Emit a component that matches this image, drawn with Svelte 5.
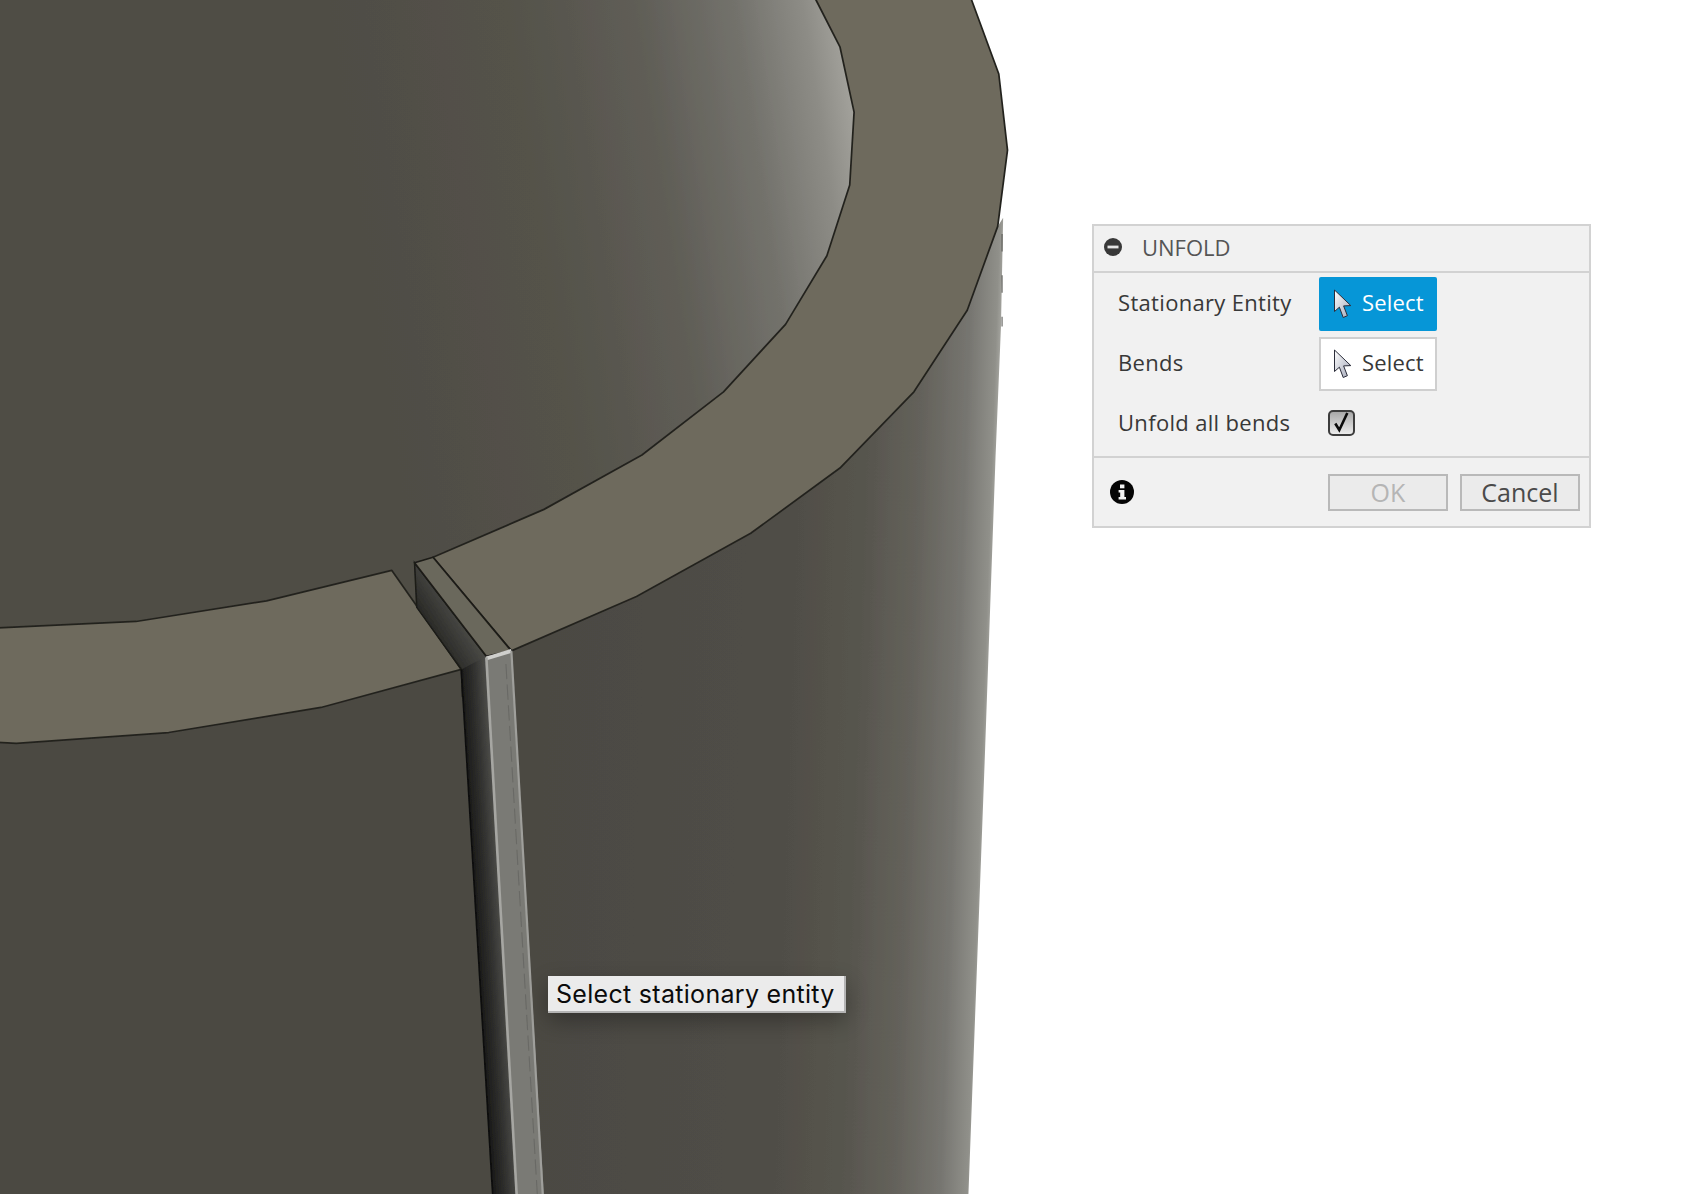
<script>
  let rows = [
    { label: 'Stationary Entity', active: true },
    { label: 'Bends', active: false }
  ];
</script>

<div class="stage">
  <!-- the model, coords are the scene's own -->
  <svg class="scene" viewBox="0 0 1568 1097" preserveAspectRatio="none">
    <defs>
      <linearGradient id="hole" gradientUnits="userSpaceOnUse" x1="330" y1="200" x2="790" y2="130">
        <stop offset="0" stop-color="#4f4d45" />
        <stop offset="0.35" stop-color="#54524a" />
        <stop offset="0.6" stop-color="#5f5d56" />
        <stop offset="0.8" stop-color="#73726c" />
        <stop offset="0.93" stop-color="#8d8c86" />
        <stop offset="1" stop-color="#a3a29c" />
      </linearGradient>
      <linearGradient id="body" gradientUnits="userSpaceOnUse" x1="500" y1="640" x2="912" y2="654">
        <stop offset="0" stop-color="#4b4943" />
        <stop offset="0.55" stop-color="#504e47" />
        <stop offset="0.7" stop-color="#57554e" />
        <stop offset="0.82" stop-color="#64625b" />
        <stop offset="0.92" stop-color="#767570" />
        <stop offset="0.98" stop-color="#90908a" />
        <stop offset="1" stop-color="#b4b4af" />
      </linearGradient>
      <linearGradient id="groove" gradientUnits="userSpaceOnUse" x1="430" y1="800" x2="462" y2="798">
        <stop offset="0" stop-color="#121211" />
        <stop offset="0.55" stop-color="#323230" />
        <stop offset="1" stop-color="#575753" />
      </linearGradient>
      <linearGradient id="wall" gradientUnits="userSpaceOnUse" x1="392" y1="570" x2="440" y2="540">
        <stop offset="0" stop-color="#2a2a27" />
        <stop offset="1" stop-color="#6a6a65" />
      </linearGradient>
      <filter id="soft"><feGaussianBlur stdDeviation="0.6" /></filter>
    </defs>

    <g filter="url(#soft)">
      <!-- inner wall -->
      <rect x="0" y="0" width="800" height="700" fill="url(#hole)" />

      <!-- outer wall -->
      <polygon
        points="0,682 15,683 155,673 295,650 424,615 470,598 585,548 690,490 772,430 840,360 889,285 917,208 922,200 920,300 915,420 905,700 890,1100 0,1100"
        fill="url(#body)"
      />

      <!-- rim, right part -->
      <polygon
        points="398,512 500,468 590,418 665,360 722,298 760,235 781,170 785,103 772,43 750,0 747,-6 891,-6 893,0 918,68 926,138 917,208 889,285 840,360 772,430 690,490 585,548 470,598"
        fill="#6e6a5d"
        stroke="#24231f"
        stroke-width="1.6"
        stroke-linejoin="round"
      />

      <!-- rim, left part -->
      <polygon
        points="-4,577 125,571 245,552 360,524 424,615 295,650 155,673 15,683 -4,682"
        fill="#6e6a5d"
        stroke="#24231f"
        stroke-width="1.6"
        stroke-linejoin="round"
      />

      <!-- side wall of the gap -->
      <polygon points="381,517 447,603 447,640 425,640 424,615 383,558" fill="url(#wall)" stroke="#1b1b18" stroke-width="1.4" />

      <!-- top of the lip -->
      <polygon points="381,517 398,512 470,598 447,603" fill="#6b675b" stroke="#1d1c19" stroke-width="1.6" stroke-linejoin="round" />

      <!-- groove and selected face running down -->
      <polygon points="424,615 447,603 475,1100 453,1100" fill="url(#groove)" />
      <polygon points="447,603 470,598 500,1100 475,1100" fill="#7a7a75" />
      <line x1="424" y1="615" x2="453" y2="1100" stroke="#0f0f0e" stroke-width="1.6" />
      <polyline points="447,605 470,598" fill="none" stroke="#cfcfcc" stroke-width="3.4" />
      <line x1="447" y1="604" x2="475" y2="1100" stroke="#a6a6a2" stroke-width="2.4" />
      <line x1="470" y1="598" x2="499" y2="1100" stroke="#9f9f9b" stroke-width="2" />
      <line x1="465" y1="610" x2="494" y2="1100" stroke="#696965" stroke-width="1" stroke-dasharray="14 5" />
    </g>

    <line x1="921" y1="215" x2="921" y2="300" stroke="#5a5a56" stroke-width="1" stroke-dasharray="16 22" />
  </svg>

  <section class="dialog">
    <header class="head">
      <svg class="minus" viewBox="0 0 18 18">
        <circle cx="9" cy="9" r="9" fill="#383838" />
        <rect x="3.5" y="7.6" width="11" height="2.8" fill="#e4e4e4" />
      </svg>
      <span>UNFOLD</span>
    </header>

    <div class="body">
      {#each rows as row}
        <div class="row">
          <span class="label">{row.label}</span>
          <button class="select" class:active={row.active}>
            <svg class="cursor" viewBox="0 0 20 30">
              <defs>
                <linearGradient id="arrow{row.active ? 'A' : 'B'}" x1="0" y1="0" x2="1" y2="1">
                  <stop offset="0" stop-color="#ffffff" />
                  <stop offset="1" stop-color="#a2a7b8" />
                </linearGradient>
              </defs>
              <path
                d="M1.5 1 L1.5 22.5 L6.4 18.2 L10.2 28.5 L14.4 26.7 L10.6 16.9 L17.8 16.6 Z"
                fill="url(#arrow{row.active ? 'A' : 'B'})"
                stroke="#2b2d3a"
                stroke-width="1"
                stroke-linejoin="miter"
              />
            </svg>
            <span class="cap">Select</span>
          </button>
        </div>
      {/each}
      <div class="row">
        <span class="label">Unfold all bends</span>
        <span class="check">
          <svg viewBox="0 0 22 22">
            <path d="M4.8 11.5 L8.8 18 L16.8 1" fill="none" stroke="#0a0a0a" stroke-width="2.6" />
          </svg>
        </span>
      </div>
    </div>

    <footer class="foot">
      <svg class="info" viewBox="0 0 24 24">
        <circle cx="12" cy="12" r="12" fill="#050505" />
        <rect x="10" y="4.5" width="4.4" height="3.8" fill="#f4f4f4" />
        <path d="M8.6 10 H14.4 V17 H16 V19.6 H8.6 V17 H10.2 V12.4 H8.6 Z" fill="#f4f4f4" />
      </svg>
      <div class="actions">
        <button class="btn" disabled>OK</button>
        <button class="btn">Cancel</button>
      </div>
    </footer>
  </section>

  <div class="tip">Select stationary entity</div>
</div>

<style>
  :global(body) {
    margin: 0;
    background: #fff;
  }

  .stage {
    position: relative;
    width: 1706px;
    height: 1194px;
    overflow: hidden;
    font-family: "Open Sans", sans-serif;
  }

  .scene {
    position: absolute;
    left: 0;
    top: 0;
    width: 1706px;
    height: 1194px;
  }

  .dialog {
    position: absolute;
    left: 1092px;
    top: 224px;
    width: 499px;
    background: #f1f1f1;
    color: #383838;
    font-size: 22px;
    letter-spacing: 0.32px;
    box-sizing: border-box;
    border: 2px solid #d2d2d2;
  }

  .head {
    display: flex;
    align-items: center;
    gap: 20px;
    height: 47px;
    padding: 0 0 3px 10px;
    box-sizing: border-box;
    border-bottom: 2px solid #d2d2d2;
    color: #555;
    letter-spacing: 0;
  }

  .minus {
    width: 18px;
    height: 18px;
  }

  .body {
    display: flex;
    flex-direction: column;
    padding: 4px 0 5px;
    gap: 6px;
  }

  .row {
    display: grid;
    grid-template-columns: 201px auto;
    align-items: center;
    height: 54px;
    padding-left: 24px;
  }

  .label,
  .cap {
    padding-bottom: 4px;
  }

  .select {
    display: flex;
    align-items: center;
    gap: 9px;
    width: 118px;
    height: 54px;
    padding: 0 0 0 12px;
    box-sizing: border-box;
    background: #fff;
    border: 2px solid #cfcfcf;
    color: #383838;
    font: inherit;
    letter-spacing: 0.2px;
  }

  .select.active {
    background: #0696d7;
    border-color: #0696d7;
    border-radius: 2px;
    color: #fff;
  }

  .cursor {
    width: 20px;
    height: 32px;
    flex: none;
  }

  .check {
    display: block;
    width: 27px;
    height: 26px;
    margin-left: 9px;
    margin-bottom: 2px;
    box-sizing: border-box;
    border: 2px solid #3d3d3d;
    border-radius: 5px;
    background: linear-gradient(#a8a8a8, #ececec);
  }

  .check svg {
    display: block;
    width: 23px;
    height: 22px;
  }

  .foot {
    display: flex;
    align-items: center;
    justify-content: space-between;
    height: 70px;
    box-sizing: border-box;
    padding: 0 9px 0 16px;
    border-top: 2px solid #d2d2d2;
  }

  .info {
    width: 24px;
    height: 24px;
  }

  .actions {
    display: flex;
    gap: 12px;
  }

  .btn {
    width: 120px;
    height: 37px;
    padding: 0;
    box-sizing: border-box;
    background: #ebebeb;
    border: 2px solid #b9b9b9;
    color: #4a4a4a;
    font: inherit;
    font-size: 25px;
    line-height: 1;
  }

  .btn:disabled {
    color: #b5b5b5;
  }

  .tip {
    position: absolute;
    left: 548px;
    top: 976px;
    width: 298px;
    height: 37px;
    box-sizing: border-box;
    padding-left: 8px;
    display: flex;
    align-items: center;
    background: #ebebeb;
    border-right: 2px solid #b4b4b4;
    border-bottom: 2px solid #b4b4b4;
    color: #0b0b0b;
    font-family: Inter, sans-serif;
    font-size: 25px;
    letter-spacing: 0.3px;
    white-space: nowrap;
    box-shadow: 0 8px 22px rgba(0, 0, 0, 0.3);
  }
</style>
